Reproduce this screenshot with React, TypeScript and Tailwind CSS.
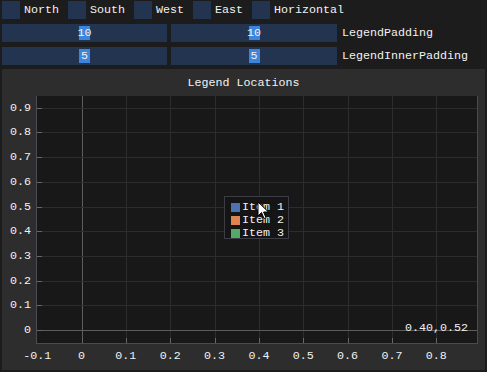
const xTicks = [-0.1, 0, 0.1, 0.2, 0.3, 0.4, 0.5, 0.6, 0.7, 0.8];
const yTicks = [0, 0.1, 0.2, 0.3, 0.4, 0.5, 0.6, 0.7, 0.8, 0.9];

// plot rect in page coords: x 37..477, y 96..343
const px = (x: number) => 81.5 + x * 443.5;
const py = (y: number) => 330 - y * 247;

const fmt = (v: number) => (Math.abs(v) < 1e-9 ? "0" : v.toFixed(1));

const Checkbox = ({ label }: { label: string }) => (
  <div className="flex items-center mr-[9px]">
    <div className="w-[18px] h-[18px] bg-[#233450]" />
    <span className="ml-[4px]">{label}</span>
  </div>
);

const Slider = ({ value, width }: { value: string; width: string }) => (
  <div className={`relative h-[18px] bg-[#233450] ${width} flex items-center justify-center`}>
    <div className="absolute left-1/2 top-[2px] -ml-[5.5px] w-[11px] h-[14px] bg-[#3d84dc]" />
    <span className="relative">{value}</span>
  </div>
);

const legendItems = [
  { name: "Item 1", color: "bg-[#4c72b0]" },
  { name: "Item 2", color: "bg-[#dd8452]" },
  { name: "Item 3", color: "bg-[#55a868]" },
];

export default function App() {
  return (
    <div className="w-[487px] h-[372px] bg-[#1c1c1c] px-[2px] pt-[1px] font-['Liberation_Mono','DejaVu_Sans_Mono',monospace] text-[11.67px] leading-[13px] text-[#f2f2f2]">
      <div className="flex items-center h-[18px]">
        <Checkbox label="North" />
        <Checkbox label="South" />
        <Checkbox label="West" />
        <Checkbox label="East" />
        <Checkbox label="Horizontal" />
      </div>

      <div className="flex items-center mt-[5px]">
        <Slider value="10" width="w-[165px]" />
        <div className="ml-[4px]">
          <Slider value="10" width="w-[166px]" />
        </div>
        <span className="ml-[5px]">LegendPadding</span>
      </div>

      <div className="flex items-center mt-[5px]">
        <Slider value="5" width="w-[165px]" />
        <div className="ml-[4px]">
          <Slider value="5" width="w-[166px]" />
        </div>
        <span className="ml-[5px]">LegendInnerPadding</span>
      </div>

      <div className="relative mt-[4px] w-[483px] h-[301px] bg-[#2d2d2d] flex flex-col">
        <div className="h-[27px] pt-[8px] flex justify-center">Legend Locations</div>
        <svg width={483} height={274} viewBox="2 96 483 274" className="block">
          <rect x={37} y={96} width={440} height={247} fill="#181818" />
          {xTicks.slice(1).map((t) => (
            <line key={"gx" + t} x1={Math.round(px(t)) + 0.5} x2={Math.round(px(t)) + 0.5} y1={96} y2={343} stroke={t === 0 ? "#5c5c5c" : "#2c2c2c"} />
          ))}
          {yTicks.map((t) => (
            <line key={"gy" + t} x1={37} x2={477} y1={Math.round(py(t)) + 0.5} y2={Math.round(py(t)) + 0.5} stroke={t === 0 ? "#5c5c5c" : "#2c2c2c"} />
          ))}
          {xTicks.slice(1).map((t) => (
            <line key={"tx" + t} x1={Math.round(px(t)) + 0.5} x2={Math.round(px(t)) + 0.5} y1={338} y2={343} stroke="#666" />
          ))}
          {yTicks.map((t) => (
            <line key={"ty" + t} x1={37} x2={42} y1={Math.round(py(t)) + 0.5} y2={Math.round(py(t)) + 0.5} stroke="#666" />
          ))}
          <rect x={36.5} y={95.5} width={441} height={248} fill="none" stroke="#4a4a52" />
          <g fill="#f2f2f2" fontSize="11.67" fontFamily="'Liberation Mono', monospace">
            {xTicks.map((t) => (
              <text key={"lx" + t} x={px(t)} y={356} textAnchor="middle" dominantBaseline="central">
                {fmt(t)}
              </text>
            ))}
            {yTicks.map((t) => (
              <text key={"ly" + t} x={31} y={py(t)} textAnchor="end" dominantBaseline="central">
                {fmt(t)}
              </text>
            ))}
            <text x={468} y={327.5} textAnchor="end" dominantBaseline="central">
              0.40,0.52
            </text>
          </g>
        </svg>

        <div className="absolute left-[222px] top-[127px] w-[65px] h-[43px] bg-[#151515] border border-[#3c3c44] pt-[4px] pl-[6px] flex flex-col">
          {legendItems.map((it) => (
            <div key={it.name} className="flex items-center h-[13px] shrink-0">
              <div className={`w-[9px] h-[9px] ${it.color}`} />
              <span className="ml-[2px]">{it.name}</span>
            </div>
          ))}
        </div>

        <svg className="absolute left-[255px] top-[132px]" width={13} height={19} viewBox="0 0 13 19">
          <path d="M1 1 L1 15 L4.5 11.5 L7 17.5 L9 16.7 L6.6 11 L11.5 11 Z" fill="#fff" stroke="#000" strokeWidth={1} strokeLinejoin="round" />
        </svg>
      </div>
    </div>
  );
}
